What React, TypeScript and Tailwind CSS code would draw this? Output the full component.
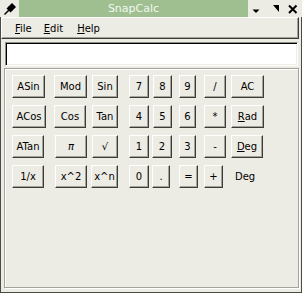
import React from "react";

type B = { label: React.ReactNode; cls: string };

const U = ({ c }: { c: string }) => <span className="underline underline-offset-[1px]">{c}</span>;

const rows: B[][] = [
  [
    { label: "ASin", cls: "w-[33px]" },
    { label: "Mod", cls: "w-[33px] ml-[9px]" },
    { label: "Sin", cls: "w-[26px] ml-[5px]" },
    { label: "7", cls: "w-[20px] ml-[11px]" },
    { label: "8", cls: "w-[19px] ml-[4px]" },
    { label: "9", cls: "w-[17px] ml-[7px]" },
    { label: "/", cls: "w-[22px] ml-[8px]" },
    { label: "AC", cls: "w-[33px] ml-[5px]" },
  ],
  [
    { label: "ACos", cls: "w-[34px]" },
    { label: "Cos", cls: "w-[32px] ml-[8px]" },
    { label: "Tan", cls: "w-[26px] ml-[6px]" },
    { label: "4", cls: "w-[20px] ml-[11px]" },
    { label: "5", cls: "w-[19px] ml-[4px]" },
    { label: "6", cls: "w-[17px] ml-[7px]" },
    { label: "*", cls: "w-[22px] ml-[8px]" },
    { label: <><U c="R" />ad</>, cls: "w-[33px] ml-[5px]" },
  ],
  [
    { label: "ATan", cls: "w-[32px]" },
    { label: <span className="italic">π</span>, cls: "w-[32px] ml-[11px]" },
    { label: "√", cls: "w-[26px] ml-[5px]" },
    { label: "1", cls: "w-[20px] ml-[11px]" },
    { label: "2", cls: "w-[20px] ml-[3px]" },
    { label: "3", cls: "w-[17px] ml-[7px]" },
    { label: "-", cls: "w-[22px] ml-[8px]" },
    { label: <><U c="D" />eg</>, cls: "w-[32px] ml-[5px]" },
  ],
  [
    { label: "1/x", cls: "w-[32px]" },
    { label: "x^2", cls: "w-[32px] ml-[11px]" },
    { label: "x^n", cls: "w-[27px] ml-[4px]" },
    { label: "0", cls: "w-[20px] ml-[11px]" },
    { label: ".", cls: "w-[18px] ml-[3px]" },
    { label: "=", cls: "w-[19px] ml-[9px]" },
    { label: "+", cls: "w-[19px] ml-[6px]" },
  ],
];

function Btn({ b }: { b: B }) {
  return (
    <div
      className={
        "h-[23px] flex items-center justify-center bg-[#ecebe4] border border-t-white border-l-white border-b-[#3c3c38] border-r-[#3c3c38] shadow-[inset_-1px_-1px_0_#a3a29b] text-[10px] text-black leading-none " +
        b.cls
      }
    >
      {b.label}
    </div>
  );
}

export default function App() {
  return (
    <div className="w-[302px] h-[293px] bg-[#ecebe4] flex flex-col overflow-hidden font-['DejaVu_Sans',sans-serif] text-black">
      {/* title bar */}
      <div className="h-[17px] flex shrink-0">
        <div className="w-[19px] flex items-center justify-center">
          <svg width="14" height="14" viewBox="0 0 14 14">
            <line x1="1.5" y1="12.5" x2="6" y2="8" stroke="#000" strokeWidth="1.5" />
            <path d="M5 5 L9 1 L13 5 L9 9 Z" fill="#000" />
            <path d="M3.5 6.5 L7.5 10.5 L9.5 8.5 L5.5 4.5 Z" fill="#000" />
          </svg>
        </div>
        <div className="flex-1 bg-[#9fbf91] flex items-center justify-center">
          <span className="text-[11px] text-[#f4f7f0] leading-none">SnapCalc</span>
        </div>
        <div className="w-[54px] relative">
          <svg width="54" height="17" viewBox="0 0 54 17" className="absolute left-0 top-0">
            <path d="M4.5 9.5 L11.5 9.5 L8 13 Z" fill="#000" />
            <path d="M25 5 L31 5 L31 12 Z" fill="#000" />
            <path d="M41 5.5 L48.5 13 M48.5 5.5 L41 13" stroke="#000" strokeWidth="2" />
          </svg>
        </div>
      </div>
      {/* body */}
      <div className="flex-1 flex flex-col border-l border-r border-b border-[#4a4a46]">
        {/* menu bar */}
        <div className="h-[22px] mr-[2px] flex items-center border border-t-white border-l-white border-b-[#3c3c38] border-r-[#3c3c38] shadow-[inset_-1px_-1px_0_#a3a29b] text-[10px]">
          <span className="ml-[13px]"><U c="F" />ile</span>
          <span className="ml-[12px]"><U c="E" />dit</span>
          <span className="ml-[14px]"><U c="H" />elp</span>
        </div>
        {/* entry */}
        <div className="mt-[3px] ml-[4px] mr-[3px] h-[24px] bg-white border border-t-[#8f8e88] border-l-[#8f8e88] border-b-white border-r-white shadow-[inset_1px_1px_0_#000,inset_-1px_-1px_0_#ecebe4]" />
        {/* panel */}
        <div className="mt-[2px] ml-[3px] mr-[2px] mb-[4px] flex-1 border border-[#a3a29b] shadow-[inset_1px_1px_0_#fff,1px_1px_0_#fff] pt-[6px] pl-[7px] flex flex-col gap-[7px]">
          {rows.map((r, i) => (
            <div key={i} className="flex items-center">
              {r.map((b, j) => (
                <Btn key={j} b={b} />
              ))}
              {i === 3 && <span className="ml-[12px] text-[10px]">Deg</span>}
            </div>
          ))}
        </div>
      </div>
    </div>
  );
}
